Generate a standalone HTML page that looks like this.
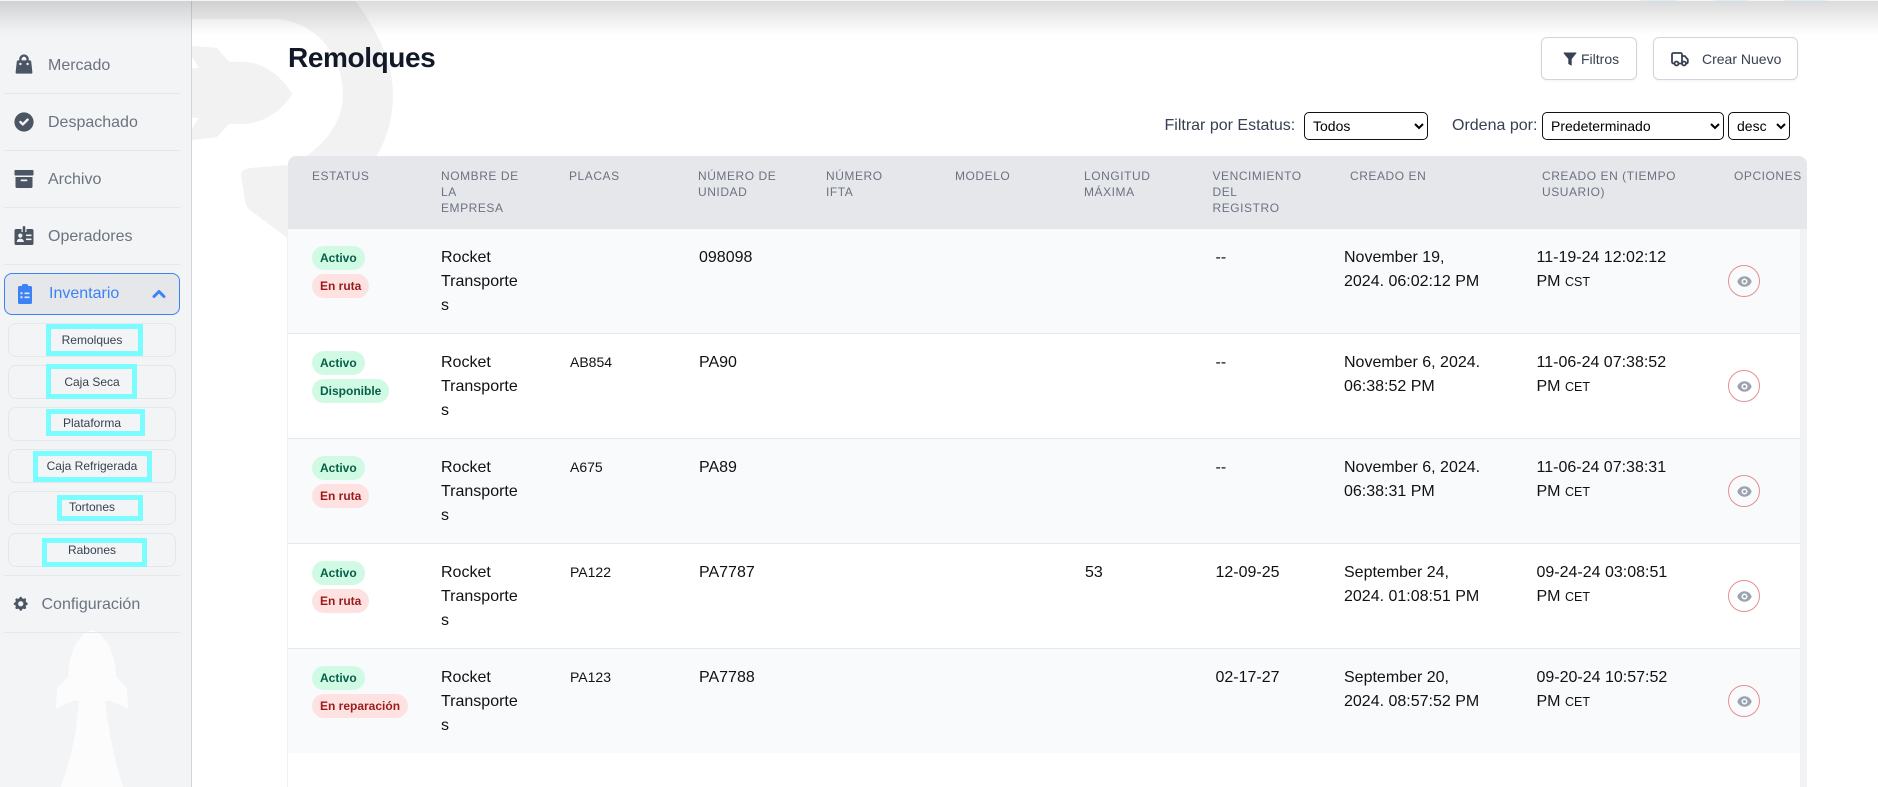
<!DOCTYPE html>
<html lang="es"><head><meta charset="utf-8"><title>Remolques</title>
<style>
*{box-sizing:border-box}
html,body{margin:0;padding:0;width:1878px;height:787px;overflow:hidden;background:#fff;font-family:"Liberation Sans",sans-serif;color:#111}
.a{position:absolute}
.t{position:absolute;white-space:nowrap;line-height:24px;font-size:16px;margin-top:1px}
#side{position:absolute;left:0;top:0;width:192px;height:787px;background:#f3f4f6;border-right:1px solid #d1d5db}
.dv{position:absolute;left:4px;width:176px;height:1px;background:#e5e7eb}
.m{position:absolute;left:48px;font-size:16px;line-height:24px;color:#6b7280;white-space:nowrap}
.sub{position:absolute;left:8px;width:168px;height:34px;border:1px solid #e5e7eb;border-radius:8px}
.sl{position:absolute;left:8px;width:168px;text-align:center;font-size:12px;line-height:16px;color:#374151}
.cy{position:absolute;border:5px solid #7bfdff}
.h{position:absolute;top:168px;font-size:12px;line-height:16px;letter-spacing:.55px;color:#6b7280;white-space:nowrap}
.row{position:absolute;left:288px;width:1512px;border-bottom:1px solid #e5e7eb}
.b{position:absolute;left:312px;height:24px;line-height:24px;padding:0 8px;border-radius:12px;font-size:12px;font-weight:700;white-space:nowrap}
.g{background:#d1fae5;color:#065f46}
.r{background:#fee2e2;color:#991b1b}
.btn{position:absolute;top:37px;height:43px;background:#fff;border:1px solid #d1d5db;border-radius:6px;box-shadow:0 1px 2px rgba(0,0,0,.05)}
.bt{position:absolute;top:49px;font-size:14px;line-height:20px;color:#374151;white-space:nowrap}
select{position:absolute;top:112px;height:28px;border:1px solid #111;border-radius:5px;background:#fff;padding:0 4px;font:14px "Liberation Sans",sans-serif;color:#000}
.eye{position:absolute;left:1728px;width:32px;height:32px;border:1px solid #e58f92;border-radius:50%}
.eye svg{position:absolute;left:7.5px;top:7.5px}
small{font-size:12.5px}
</style></head><body>

<svg class="a" style="left:0;top:0" width="1878" height="787" viewBox="0 0 1878 787">
<g fill="#f2f2f2">
<path fill-rule="evenodd" d="M191,-30H330C365,10 393,50 393,95C393,120 386,140 376,157H305C327,142 343,120 343,95C343,50 310,19 272,19H191Z"/>
<path d="M288,165L250,168Q240,170 241,176L245,200Q246,207 250,210L290,240Z"/>
<path d="M191,46L216.7,47.7L229,61.7H241.7C262,61.7 281,75 292.3,94C281,112 262,124 241.7,124H229L216.7,137.3L191,140V130L199,117.7H191V68.3H199L191,55Z"/>
</g>
</svg>

<div id="side"></div>
<svg class="a" style="left:0;top:0" width="191" height="787" viewBox="0 0 191 787">
<path fill="#fcfcfc" d="M91.7,630C78,634 68,655 68.3,676.7L57.3,687L55.7,709L72.3,701H79.3C77,718 76,732 73.3,743C70,760 65,775 60.7,787H123.3C119,775 115,760 111.7,743C109,730 107,716 105,701H111L128.3,709L126.7,688L116,676.7C116,655 106,634 91.7,630Z"/>
</svg>

<svg class="a" style="left:12px;top:52px" width="24" height="24" viewBox="0 0 20 20" fill="#4b5563"><path fill-rule="evenodd" d="M10 2a4 4 0 00-4 4v1H5a1 1 0 00-.994.89l-1 9A1 1 0 004 18h12a1 1 0 00.994-1.11l-1-9A1 1 0 0015 7h-1V6a4 4 0 00-4-4zm2 5V6a2 2 0 10-4 0v1h4zm-6 3a1 1 0 112 0 1 1 0 01-2 0zm7-1a1 1 0 100 2 1 1 0 000-2z"/></svg>
<div class="m" style="top:54px">Mercado</div>
<div class="dv" style="top:93px"></div>

<svg class="a" style="left:12px;top:109.5px" width="24" height="24" viewBox="0 0 20 20" fill="#4b5563"><path fill-rule="evenodd" d="M10 18a8 8 0 100-16 8 8 0 000 16zm3.707-9.293a1 1 0 00-1.414-1.414L9 10.586 7.707 9.293a1 1 0 00-1.414 1.414l2 2a1 1 0 001.414 0l4-4z"/></svg>
<div class="m" style="top:110.5px">Despachado</div>
<div class="dv" style="top:150px"></div>

<svg class="a" style="left:14px;top:169px" width="20" height="20" viewBox="0 0 20 20" fill="#4b5563"><rect x=".5" y="1" width="19" height="5.5" rx=".8"/><path fill-rule="evenodd" d="M1.5 8H18.500V17.500a1.500 1.500 0 01-1.500 1.500H3a1.500 1.500 0 01-1.500-1.500zM7.500 10.500a.8.8 0 000 1.800H12.500a.8.8 0 000-1.800z"/></svg>
<div class="m" style="top:168px">Archivo</div>
<div class="dv" style="top:207px"></div>

<svg class="a" style="left:14px;top:226px" width="20" height="20" viewBox="0 0 20 20"><rect x=".5" y="3" width="19" height="16" rx="1.800" fill="#4b5563"/><rect x="7.500" y="2" width="5" height="4" fill="#f3f4f6"/><rect x="8.700" y="0" width="2.600" height="6.500" rx="1.200" fill="#4b5563"/><circle cx="6.300" cy="9.600" r="2.100" fill="#f3f4f6"/><path d="M2.800 16C2.800 13.500 4.500 12.800 6.300 12.800S9.800 13.500 9.800 16Z" fill="#f3f4f6"/><rect x="12" y="8.500" width="5.500" height="1.600" fill="#f3f4f6"/><rect x="12" y="12.500" width="5.500" height="1.600" fill="#f3f4f6"/></svg>
<div class="m" style="top:224.5px">Operadores</div>
<div class="dv" style="top:264px"></div>

<div class="a" style="left:4px;top:273px;width:176px;height:42px;background:#e5e7eb;border:1px solid #3b82f6;border-radius:8px"></div>
<svg class="a" style="left:17px;top:284px" width="16" height="20" viewBox="0 0 16 20"><path fill="#3b82f6" fill-rule="evenodd" d="M2.500 2H5V1.500A1.500 1.500 0 016.500 0h3A1.500 1.500 0 0111 1.500V2h2.500A1.500 1.500 0 0115 3.500v15a1.500 1.500 0 01-1.500 1.500h-11A1.500 1.500 0 011 18.500v-15A1.500 1.500 0 012.500 2zM3.500 8.300v2h2v-2zm4 .2v1.600H12.500V8.500zm-4 3.800v2h2v-2zm4 .2v1.600H12.500V12.500z"/></svg>
<div class="m" style="left:49px;top:282px;color:#3b82f6">Inventario</div>
<svg class="a" style="left:152px;top:288px" width="14" height="12" viewBox="0 0 14 12" fill="none" stroke="#3b82f6" stroke-width="3" stroke-linecap="round" stroke-linejoin="round"><path d="M2 8.500L7 3.500l5 5"/></svg>

<div class="sub" style="top:323px"></div>
<div class="sub" style="top:365px"></div>
<div class="sub" style="top:407px"></div>
<div class="sub" style="top:449px"></div>
<div class="sub" style="top:491px"></div>
<div class="sub" style="top:533px"></div>
<div class="cy" style="left:46px;top:324px;width:97px;height:32px"></div>
<div class="cy" style="left:46px;top:364px;width:91px;height:35px"></div>
<div class="cy" style="left:46px;top:409px;width:99px;height:27px"></div>
<div class="cy" style="left:33px;top:451px;width:119px;height:31px"></div>
<div class="cy" style="left:57px;top:495px;width:86px;height:26px"></div>
<div class="cy" style="left:42px;top:538px;width:105px;height:29px"></div>
<div class="sl" style="top:332px">Remolques</div>
<div class="sl" style="top:374px">Caja Seca</div>
<div class="sl" style="top:415px">Plataforma</div>
<div class="sl" style="top:458px">Caja Refrigerada</div>
<div class="sl" style="top:499px">Tortones</div>
<div class="sl" style="top:542px">Rabones</div>
<div class="dv" style="top:575px"></div>
<svg class="a" style="left:12px;top:595px" width="17.500" height="17.500" viewBox="0 0 20 20" fill="#4b5563"><path fill-rule="evenodd" d="M11.490 3.170c-.380-1.560-2.600-1.560-2.980 0a1.532 1.532 0 01-2.286.948c-1.372-.836-2.942.734-2.106 2.106.540.886.061 2.042-.947 2.287-1.561.379-1.561 2.600 0 2.978a1.532 1.532 0 01.947 2.287c-.836 1.372.734 2.942 2.106 2.106a1.532 1.532 0 012.287.947c.379 1.561 2.600 1.561 2.978 0a1.533 1.533 0 012.287-.947c1.372.836 2.942-.734 2.106-2.106a1.533 1.533 0 01.947-2.287c1.561-.379 1.561-2.600 0-2.978a1.532 1.532 0 01-.947-2.287c.836-1.372-.734-2.942-2.106-2.106a1.532 1.532 0 01-2.287-.947zM10 13a3 3 0 100-6 3 3 0 000 6z"/></svg>
<div class="m" style="left:41.500px;top:593px">Configuración</div>
<div class="dv" style="top:632px"></div>

<div class="a" style="left:288px;top:42px;font-size:28px;line-height:32px;font-weight:700;letter-spacing:-.4px;color:#111827;white-space:nowrap">Remolques</div>

<div class="btn" style="left:1541px;width:96px"></div>
<svg class="a" style="left:1563px;top:52px" width="14" height="14" viewBox="0 0 14 14" fill="#374151"><path d="M1 .5H13a.5.5 0 01.4.8L8.700 7v6.200a.4.4 0 01-.6.3L5.600 12.100a.6.6 0 01-.3-.5V7L.6 1.300A.5.5 0 011 .5z"/></svg>
<div class="bt" style="left:1581px">Filtros</div>
<div class="btn" style="left:1653px;width:145px"></div>
<svg class="a" style="left:1671px;top:52px" width="18" height="15" viewBox="0 0 18 15" fill="none" stroke="#374151" stroke-width="1.800"><path d="M3 11.500H2.500A1.500 1.500 0 011 10V2.500A1.500 1.500 0 012.500 1H9.500A1.500 1.500 0 0111 2.500V11.500H8"/><path d="M11 4h2.800L16.800 7.500V10a1.500 1.500 0 01-1.300 1.500"/><circle cx="5.500" cy="11.500" r="2"/><circle cx="13" cy="11.500" r="2"/></svg>
<div class="bt" style="left:1702px">Crear Nuevo</div>

<div class="t" style="left:1164.500px;top:113px;color:#374151">Filtrar por Estatus:</div>
<select style="left:1304px;width:124px"><option>Todos</option></select>
<div class="t" style="left:1452px;top:113px;color:#374151">Ordena por:</div>
<select style="left:1542px;width:182px"><option>Predeterminado</option></select>
<select style="left:1728px;width:62px"><option>desc</option></select>

<div class="a" style="left:287px;top:229px;width:1px;height:558px;background:#f0f1f3"></div>
<div class="a" style="left:1800px;top:229px;width:7px;height:558px;background:#f1f2f3"></div>
<div class="a" style="left:287.5px;top:156px;width:1519.5px;height:73px;background:#e5e7eb;border-radius:8px 8px 0 0"></div>
<div class="h" style="left:312px">ESTATUS</div>
<div class="h" style="left:441px">NOMBRE DE<br>LA<br>EMPRESA</div>
<div class="h" style="left:569px">PLACAS</div>
<div class="h" style="left:698px">NÚMERO DE<br>UNIDAD</div>
<div class="h" style="left:826px">NÚMERO<br>IFTA</div>
<div class="h" style="left:955px">MODELO</div>
<div class="h" style="left:1084px">LONGITUD<br>MÁXIMA</div>
<div class="h" style="left:1212.500px">VENCIMIENTO<br>DEL<br>REGISTRO</div>
<div class="h" style="left:1350px">CREADO EN</div>
<div class="h" style="left:1542px">CREADO EN (TIEMPO<br>USUARIO)</div>
<div class="h" style="left:1734px">OPCIONES</div>

<!-- row 1 -->
<div class="row" style="top:229px;height:105px;background:#f9fafb"></div>
<div class="b g" style="top:246px">Activo</div><div class="b r" style="top:274px">En ruta</div>
<div class="t" style="left:441px;top:245px">Rocket<br>Transporte<br>s</div>
<div class="t" style="left:699px;top:245px">098098</div>
<div class="t" style="left:1215.500px;top:245px">--</div>
<div class="t" style="left:1344px;top:245px">November 19,<br>2024. 06:02:12 PM</div>
<div class="t" style="left:1536.500px;top:245px">11-19-24 12:02:12<br>PM <small>CST</small></div>
<div class="eye" style="top:265px"><svg width="15" height="15" viewBox="0 0 20 20" fill="#9ca3af"><path d="M10 12a2 2 0 100-4 2 2 0 000 4z"/><path fill-rule="evenodd" d="M.458 10C1.732 5.943 5.522 3 10 3s8.268 2.943 9.542 7c-1.274 4.057-5.064 7-9.542 7S1.732 14.057.458 10zM14 10a4 4 0 11-8 0 4 4 0 018 0z"/></svg></div>

<!-- row 2 -->
<div class="row" style="top:334px;height:105px;background:#fff"></div>
<div class="b g" style="top:351px">Activo</div><div class="b g" style="top:379px">Disponible</div>
<div class="t" style="left:441px;top:350px">Rocket<br>Transporte<br>s</div>
<div class="t" style="left:570px;top:349px;font-size:14px">AB854</div>
<div class="t" style="left:699px;top:350px">PA90</div>
<div class="t" style="left:1215.500px;top:350px">--</div>
<div class="t" style="left:1344px;top:350px">November 6, 2024.<br>06:38:52 PM</div>
<div class="t" style="left:1536.500px;top:350px">11-06-24 07:38:52<br>PM <small>CET</small></div>
<div class="eye" style="top:370px"><svg width="15" height="15" viewBox="0 0 20 20" fill="#9ca3af"><path d="M10 12a2 2 0 100-4 2 2 0 000 4z"/><path fill-rule="evenodd" d="M.458 10C1.732 5.943 5.522 3 10 3s8.268 2.943 9.542 7c-1.274 4.057-5.064 7-9.542 7S1.732 14.057.458 10zM14 10a4 4 0 11-8 0 4 4 0 018 0z"/></svg></div>

<!-- row 3 -->
<div class="row" style="top:439px;height:104.500px;background:#f9fafb"></div>
<div class="b g" style="top:456px">Activo</div><div class="b r" style="top:484px">En ruta</div>
<div class="t" style="left:441px;top:455px">Rocket<br>Transporte<br>s</div>
<div class="t" style="left:570px;top:454px;font-size:14px">A675</div>
<div class="t" style="left:699px;top:455px">PA89</div>
<div class="t" style="left:1215.500px;top:455px">--</div>
<div class="t" style="left:1344px;top:455px">November 6, 2024.<br>06:38:31 PM</div>
<div class="t" style="left:1536.500px;top:455px">11-06-24 07:38:31<br>PM <small>CET</small></div>
<div class="eye" style="top:475px"><svg width="15" height="15" viewBox="0 0 20 20" fill="#9ca3af"><path d="M10 12a2 2 0 100-4 2 2 0 000 4z"/><path fill-rule="evenodd" d="M.458 10C1.732 5.943 5.522 3 10 3s8.268 2.943 9.542 7c-1.274 4.057-5.064 7-9.542 7S1.732 14.057.458 10zM14 10a4 4 0 11-8 0 4 4 0 018 0z"/></svg></div>

<!-- row 4 -->
<div class="row" style="top:543.500px;height:105px;background:#fff"></div>
<div class="b g" style="top:561px">Activo</div><div class="b r" style="top:589px">En ruta</div>
<div class="t" style="left:441px;top:560px">Rocket<br>Transporte<br>s</div>
<div class="t" style="left:570px;top:559px;font-size:14px">PA122</div>
<div class="t" style="left:699px;top:560px">PA7787</div>
<div class="t" style="left:1085px;top:560px">53</div>
<div class="t" style="left:1215.500px;top:560px">12-09-25</div>
<div class="t" style="left:1344px;top:560px">September 24,<br>2024. 01:08:51 PM</div>
<div class="t" style="left:1536.500px;top:560px">09-24-24 03:08:51<br>PM <small>CET</small></div>
<div class="eye" style="top:580px"><svg width="15" height="15" viewBox="0 0 20 20" fill="#9ca3af"><path d="M10 12a2 2 0 100-4 2 2 0 000 4z"/><path fill-rule="evenodd" d="M.458 10C1.732 5.943 5.522 3 10 3s8.268 2.943 9.542 7c-1.274 4.057-5.064 7-9.542 7S1.732 14.057.458 10zM14 10a4 4 0 11-8 0 4 4 0 018 0z"/></svg></div>

<!-- row 5 -->
<div class="row" style="top:648.500px;height:104.500px;background:#f9fafb;border-bottom:0"></div>
<div class="b g" style="top:666px">Activo</div><div class="b r" style="top:694px">En reparación</div>
<div class="t" style="left:441px;top:665px">Rocket<br>Transporte<br>s</div>
<div class="t" style="left:570px;top:664px;font-size:14px">PA123</div>
<div class="t" style="left:699px;top:665px">PA7788</div>
<div class="t" style="left:1215.500px;top:665px">02-17-27</div>
<div class="t" style="left:1344px;top:665px">September 20,<br>2024. 08:57:52 PM</div>
<div class="t" style="left:1536.500px;top:665px">09-20-24 10:57:52<br>PM <small>CET</small></div>
<div class="eye" style="top:685px"><svg width="15" height="15" viewBox="0 0 20 20" fill="#9ca3af"><path d="M10 12a2 2 0 100-4 2 2 0 000 4z"/><path fill-rule="evenodd" d="M.458 10C1.732 5.943 5.522 3 10 3s8.268 2.943 9.542 7c-1.274 4.057-5.064 7-9.542 7S1.732 14.057.458 10zM14 10a4 4 0 11-8 0 4 4 0 018 0z"/></svg></div>

<div class="a" style="left:0;top:1px;width:1878px;height:35px;background:linear-gradient(rgba(0,0,0,.14),rgba(0,0,0,.015) 85%,rgba(0,0,0,0));pointer-events:none"></div>
<div class="a" style="left:0;top:0;width:1878px;height:1px;background:#f4f4f4"></div>
<div class="a" style="left:1641px;top:0;width:36px;height:1px;background:#dceff8"></div>
<div class="a" style="left:1714px;top:0;width:34px;height:1px;background:#dceff8"></div>
<div class="a" style="left:1784px;top:0;width:42px;height:1px;background:#dceff8"></div>
</body></html>
